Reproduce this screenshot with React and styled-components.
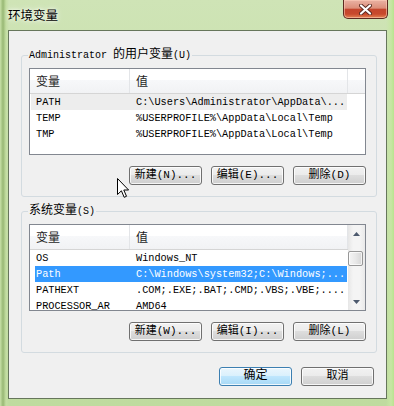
import React from 'react';
import styled, { createGlobalStyle } from 'styled-components';

const GlobalStyle = createGlobalStyle`
  html, body {
    margin: 0;
    padding: 0;
  }
  body {
    width: 394px;
    height: 406px;
    overflow: hidden;
    background: #c2dca4;
    font-family: "Liberation Mono", "Noto Sans CJK SC", monospace;
  }
`;

const Frame = styled.div`
  position: relative;
  width: 394px;
  height: 406px;
  box-sizing: border-box;
  padding: 0 7px 7px 8px;
  display: flex;
  flex-direction: column;
  background:
    linear-gradient(90deg, #c8e1a8 0px, #98b874 3px, #c4dea3 6px, rgba(196, 222, 163, 0) 9px),
    linear-gradient(270deg, #b9e38f 0px, #c7e6a4 3px, rgba(199, 230, 164, 0) 8px),
    linear-gradient(180deg, #cfe4b6 0%, #c6dfaa 40%, #bfdb9f 100%);
`;

const TitleBar = styled.div`
  height: 30px;
  display: flex;
  align-items: flex-start;
  flex-shrink: 0;
`;

const Title = styled.span`
  padding-top: 8px;
  font-family: "Noto Sans CJK SC", sans-serif;
  font-size: 12.5px;
  line-height: 14px;
  color: #000;
  text-shadow: 0 0 6px rgba(255, 255, 255, 0.95), 0 0 3px rgba(255, 255, 255, 0.9);
`;

const CloseButton = styled.div`
  margin-left: auto;
  margin-right: -1px;
  width: 45px;
  height: 19px;
  box-sizing: border-box;
  border: 1px solid #5c2a20;
  border-top: none;
  border-radius: 0 0 5px 5px;
  display: flex;
  align-items: center;
  justify-content: center;
  background: linear-gradient(180deg, #eab2a4 0%, #dc8f7a 45%, #c4462d 52%, #c8492c 78%, #e48454 100%);
  box-shadow: inset 0 0 0 1px rgba(255, 210, 190, 0.55);
`;

const Client = styled.div`
  flex: 1;
  display: flex;
  flex-direction: column;
  border: 1px solid #66765b;
  background: #f0f0f0;
  padding: 17px 9px 0 12px;
`;

const Group = styled.fieldset`
  margin: ${p => p.$first ? 0 : 7}px 0 0 0;
  padding: 6px 10px 11px 7px;
  border: 1px solid #d3dbe0;
  border-radius: 3px;
  min-width: 0;
`;

const Legend = styled.legend`
  height: 14px;
  margin-left: -1px;
  padding: 0 1px;
  font-size: 10px;
  line-height: 14px;
  color: #000;
  white-space: nowrap;
`;

const Cjk = styled.span`
  font-family: "Noto Sans CJK SC", sans-serif;
  font-size: 12px;
  line-height: 10px;
`;

const List = styled.div`
  height: 87px;
  box-sizing: border-box;
  border: 1px solid #828790;
  background: #fff;
  display: flex;
  overflow: hidden;
`;

const Table = styled.div`
  flex: 1;
  min-width: 0;
  display: flex;
  flex-direction: column;
`;

const Header = styled.div`
  height: 24px;
  flex-shrink: 0;
  display: grid;
  grid-template-columns: 100px 218px 1fr;
  border-bottom: 1px solid #d5d5d5;
  background: linear-gradient(180deg, #ffffff 0%, #ffffff 45%, #f7f8fa 46%, #f1f2f4 100%);
`;

const HeadCell = styled.div`
  padding-left: 6px;
  border-right: 1px solid #e3e5e8;
  font-family: "Noto Sans CJK SC", sans-serif;
  font-size: 12px;
  line-height: 24px;
  color: #1e1e1e;
`;

const Row = styled.div`
  flex-shrink: 0;
  height: 16px;
  width: ${p => p.$selected ? 312 : 316}px;
  margin-left: ${p => p.$selected ? 5 : 1}px;
  display: grid;
  grid-template-columns: ${p => p.$selected ? 95 : 99}px 1fr;
  font-size: 10.25px;
  line-height: 16px;
  white-space: nowrap;
  color: ${p => p.$selected ? '#fff' : '#000'};
  background: ${p => p.$selected ? '#3399ff' : p.$hover ? '#ededed' : 'transparent'};
`;

const Cell = styled.div`
  overflow: hidden;
  padding-left: ${p => p.$pad}px;
`;

const Scrollbar = styled.div`
  width: 17px;
  flex-shrink: 0;
  display: flex;
  flex-direction: column;
  background: linear-gradient(90deg, #e6e6e6 0%, #f4f4f4 30%, #f4f4f4 70%, #e9e9e9 100%);
`;

const ScrollButton = styled.div`
  height: 17px;
  flex-shrink: 0;
  display: flex;
  align-items: center;
  justify-content: center;
`;

const Track = styled.div`
  flex: 1;
  padding-top: 9px;
`;

const Thumb = styled.div`
  width: 15px;
  height: 15px;
  box-sizing: border-box;
  border: 1px solid #979797;
  border-radius: 2px;
  background: linear-gradient(90deg, #f4f4f4 0%, #e8e8e8 50%, #d6d6d6 100%);
  box-shadow: inset 0 0 0 1px rgba(255, 255, 255, 0.7);
`;

const ButtonRow = styled.div`
  margin-top: ${p => p.$top}px;
  padding-right: ${p => p.$right || 0}px;
  display: flex;
  justify-content: flex-end;
  gap: 9px;
`;

const Button = styled.button`
  width: ${p => p.$w}px;
  height: 19px;
  padding: 0;
  box-sizing: border-box;
  border: 1px solid ${p => p.$primary ? '#3c7fb1' : '#707070'};
  border-radius: 3px;
  font-family: "Liberation Mono", "Noto Sans CJK SC", monospace;
  font-size: ${p => p.$primary ? 12 : 11}px;
  line-height: 17px;
  color: #000;
  background: ${p => p.$primary
    ? 'linear-gradient(180deg, #eaf6fd 0%, #d9f0fc 48%, #bee6fd 50%, #a7d9f5 100%)'
    : 'linear-gradient(180deg, #f2f2f2 0%, #ebebeb 48%, #dddddd 50%, #cfcfcf 100%)'};
  box-shadow: inset 0 0 0 1px rgba(255, 255, 255, 0.8);
`;

const Pointer = styled.svg`
  position: absolute;
  left: 117px;
  top: 178px;
`;

const Arrow = ({ down }) => (
  <svg width="7" height="4" viewBox="0 0 7 4">
    <path d={down ? 'M0 0 H7 L3.5 4 Z' : 'M0 4 H7 L3.5 0 Z'} fill="#4d5a6e" />
  </svg>
);

const userVars = [
  ['PATH', 'C:\\Users\\Administrator\\AppData\\...'],
  ['TEMP', '%USERPROFILE%\\AppData\\Local\\Temp'],
  ['TMP', '%USERPROFILE%\\AppData\\Local\\Temp'],
];

const sysVars = [
  ['OS', 'Windows_NT'],
  ['Path', 'C:\\Windows\\system32;C:\\Windows;...'],
  ['PATHEXT', '.COM;.EXE;.BAT;.CMD;.VBS;.VBE;....'],
  ['PROCESSOR_AR', 'AMD64'],
];

const VarRows = ({ rows, hover, selected }) => rows.map(([name, value], i) => (
  <Row key={name} $hover={i === hover} $selected={i === selected}>
    <Cell $pad={i === selected ? 1 : 5}>{name}</Cell>
    <Cell $pad={6}>{value}</Cell>
  </Row>
));

const TableHeader = () => (
  <Header>
    <HeadCell>变量</HeadCell>
    <HeadCell>值</HeadCell>
    <div />
  </Header>
);

const Buttons = ({ keys }) => (
  <ButtonRow $top={11}>
    <Button $w={73}>新建({keys[0]})...</Button>
    <Button $w={73}>编辑({keys[1]})...</Button>
    <Button $w={73}>删除({keys[2]})</Button>
  </ButtonRow>
);

const App = () => (
  <>
    <GlobalStyle />
    <Frame>
      <TitleBar>
        <Title>环境变量</Title>
        <CloseButton>
          <svg width="13" height="11" viewBox="0 0 13 11">
            <path d="M2 1.5 L11 9.5 M11 1.5 L2 9.5" stroke="#5a2a22" strokeWidth="4" strokeLinecap="round" />
            <path d="M2 1.5 L11 9.5 M11 1.5 L2 9.5" stroke="#fff" strokeWidth="2.2" strokeLinecap="round" />
          </svg>
        </CloseButton>
      </TitleBar>
      <Client>
        <Group $first>
          <Legend>Administrator <Cjk>的用户变量</Cjk>(U)</Legend>
          <List>
            <Table>
              <TableHeader />
              <VarRows rows={userVars} hover={0} />
            </Table>
          </List>
          <Buttons keys={['N', 'E', 'D']} />
        </Group>
        <Group>
          <Legend><Cjk>系统变量</Cjk>(S)</Legend>
          <List>
            <Table>
              <TableHeader />
              <VarRows rows={sysVars} selected={1} />
            </Table>
            <Scrollbar>
              <ScrollButton><Arrow /></ScrollButton>
              <Track><Thumb /></Track>
              <ScrollButton><Arrow down /></ScrollButton>
            </Scrollbar>
          </List>
          <Buttons keys={['W', 'I', 'L']} />
        </Group>
        <ButtonRow $top={14} $right={3}>
          <Button $w={73} $primary>确定</Button>
          <Button $w={73}>取消</Button>
        </ButtonRow>
      </Client>
      <Pointer width="13" height="21" viewBox="0 0 13 21">
        <path d="M0.5 0.5 V16.5 L4.4 12.8 L7.2 19.3 L9.5 18.3 L6.8 12 H11.6 Z" fill="#fff" stroke="#000" strokeWidth="1" strokeLinejoin="round" />
      </Pointer>
    </Frame>
  </>
);

export default App;
